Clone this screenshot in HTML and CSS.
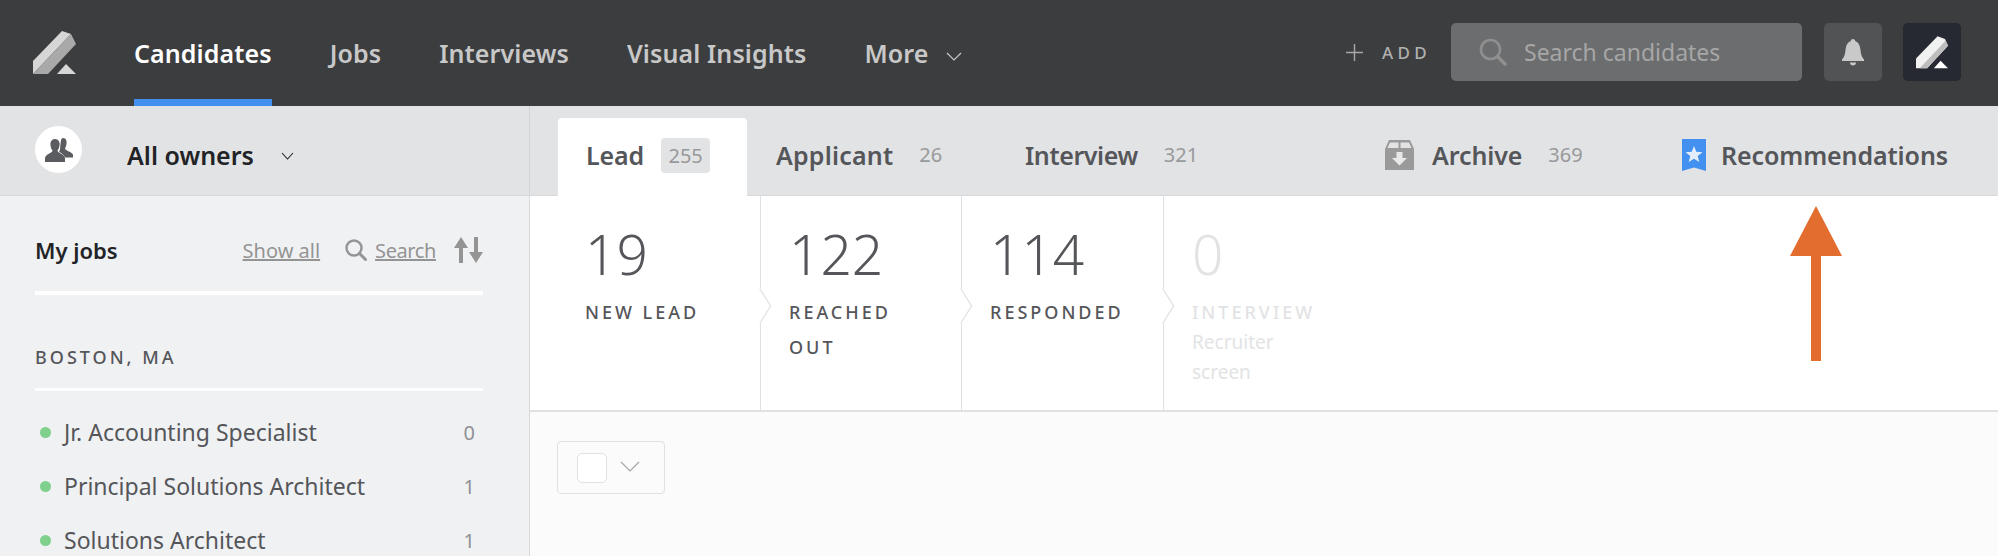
FILE: index.html
```html
<!DOCTYPE html>
<html lang="en">
<head>
    <title>Candidates</title>
    <meta charset="UTF-8" />
    <link rel="stylesheet" href="styles.css">
</head>
<body>
    <header class="topbar">
        <svg class="logo" viewBox="33 30 43 44">
            <path d="M33 60 62 30 71 33 33 73Z" fill="#d6d6d6"/>
            <path d="M33 73 71 33 76 43 48 73Z" fill="#a9a9a9"/>
            <path d="M57 73 66 63 76 73Z" fill="#d6d6d6"/>
        </svg>
        <nav class="mainnav">
            <a class="active">Candidates</a>
            <a>Jobs</a>
            <a>Interviews</a>
            <a>Visual Insights</a>
            <a>More<svg class="chev" viewBox="0 0 16 9"><path d="M1 1 8 8 15 1" fill="none" stroke="#c8c8c8" stroke-width="1.2"/></svg></a>
        </nav>
        <div class="topright">
            <svg class="plus" viewBox="0 0 17 17"><path d="M8.5 0V17M0 8.500H17" stroke="#a8a8a8" stroke-width="1.4"/></svg>
            <span class="add">ADD</span>
            <div class="search">
                <svg class="search-icon" viewBox="0 0 28 28"><circle cx="11.500" cy="11.500" r="9.500" fill="none" stroke="#8f8f8f" stroke-width="2.600"/><path d="M18.500 18.500 26 26" stroke="#8f8f8f" stroke-width="3.600" stroke-linecap="round"/></svg>
                <span>Search candidates</span>
            </div>
            <div class="iconbtn bell">
                <svg viewBox="0 0 24 28" width="24" height="28"><path d="M12 1c1.500 0 2.200 1 2.300 2.200C18 4.500 19 8 19.500 12c.4 4 1 7 3.500 9.500V23H1v-1.500C3.500 19 4.100 16 4.500 12 5 8 6 4.500 9.700 3.200 9.800 2 10.500 1 12 1Z" fill="#c9c9c9"/><path d="M9 24.500h6c0 2-1.300 3-3 3s-3-1-3-3Z" fill="#c9c9c9"/></svg>
            </div>
            <div class="iconbtn avatar">
                <svg viewBox="33 30 43 44" width="32" height="33">
                    <path d="M33 60 62 30 72 34 76 43 48 73H33Z" fill="#f1f1f1"/>
                    <path d="M38 73 73 36 76 43 48 73Z" fill="#bdbdbd"/>
                    <path d="M57 73 66 63 76 73Z" fill="#fff"/>
                </svg>
            </div>
        </div>
    </header>

    <div class="subbar">
        <div class="owners">
            <div class="owner-pic">
                <svg viewBox="0 0 30 26" width="30" height="26">
                    <path d="M19 1c3 0 4 3 3.500 6-.3 2-1 3.500-1.500 4.500 0 2 6 3 8 6v3H21c-1-3-4-4.500-6-5.500 1.500-2 1-5 1.500-8C17 4 17 1 19 1Z" fill="#5b5c5f"/>
                    <path d="M11 2c3.500 0 5 3 4.500 6.500-.3 2-1 4-2 5 0 2.500 7 3.500 7.500 7.500v4H1v-4c.5-4 7.500-5 7.500-7.500-1-1-1.700-3-2-5C6 5 7.500 2 11 2Z" fill="#5b5c5f"/>
                </svg>
            </div>
            <span class="owner-name">All owners</span>
            <svg class="chev-small" viewBox="0 0 13 8"><path d="M1 1 6.500 7 12 1" fill="none" stroke="#222" stroke-width="1.100"/></svg>
        </div>
        <div class="tabs">
            <div class="tab active">Lead <span class="badge">255</span></div>
            <div class="tab applicant">Applicant <span class="count">26</span></div>
            <div class="tab interview">Interview <span class="count">321</span></div>
            <div class="tab archive">
                <svg viewBox="0 0 29 30" width="29" height="30">
                    <path d="M4 0H25L29 9V30H0V9Z" fill="#9a9a9b"/>
                    <path d="M5 2.500H13.500V8H2.500ZM15.500 2.500H24L26.500 8H15.500Z" fill="#e2e3e5"/>
                    <path d="M11.500 12H17.500V18H22L14.500 25.500 7 18H11.500Z" fill="#e8e8e8"/>
                </svg>
                Archive <span class="count">369</span>
            </div>
            <div class="tab recs">
                <svg viewBox="0 0 24 32" width="24" height="32">
                    <path d="M0 0H24V32L12 28.500 0 32Z" fill="#4290ef"/>
                    <path d="M12 7 14.300 12.800 20.500 13.200 15.700 17.100 17.300 23.100 12 19.800 6.700 23.100 8.300 17.100 3.500 13.200 9.700 12.800Z" fill="#e4eefb"/>
                </svg>
                Recommendations
            </div>
        </div>
    </div>

    <div class="content">
        <aside class="sidebar">
            <div class="side-head">
                <strong>My jobs</strong>
                <a class="show-all">Show all</a>
                <svg class="side-search" viewBox="0 0 22 22"><circle cx="9" cy="9" r="7.500" fill="none" stroke="#949494" stroke-width="2.400"/><path d="M14.500 14.500 20.500 20.500" stroke="#949494" stroke-width="3" stroke-linecap="round"/></svg>
                <a class="search-link">Search</a>
                <svg class="sort" viewBox="0 0 29 26">
                    <path d="M7 0 14 11H9V26H5V11H0Z" fill="#949494"/>
                    <path d="M22 26 15 15H20V0H24V15H29Z" fill="#949494"/>
                </svg>
            </div>
            <div class="location">BOSTON, MA</div>
            <ul class="joblist">
                <li><i class="dot"></i>Jr. Accounting Specialist<span class="num">0</span></li>
                <li><i class="dot"></i>Principal Solutions Architect<span class="num">1</span></li>
                <li><i class="dot"></i>Solutions Architect<span class="num">1</span></li>
            </ul>
        </aside>
        <main class="main">
            <div class="stages">
                <div class="stage first">
                    <div class="big">19</div>
                    <div class="label">NEW LEAD</div>
                </div>
                <div class="stage second">
                    <div class="big">122</div>
                    <div class="label">REACHED OUT</div>
                </div>
                <div class="stage third">
                    <div class="big">114</div>
                    <div class="label">RESPONDED</div>
                </div>
                <div class="stage off">
                    <div class="big">0</div>
                    <div class="label">INTERVIEW</div>
                    <div class="sub">Recruiter screen</div>
                </div>
            </div>
            <div class="listarea">
                <div class="selectbox">
                    <span class="check"></span>
                    <svg class="chev-box" viewBox="0 0 20 11"><path d="M1 1 10 10 19 1" fill="none" stroke="#a5a5a5" stroke-width="1.200"/></svg>
                </div>
            </div>
        </main>
    </div>

    <svg class="callout" viewBox="0 0 52 155" width="52" height="155">
        <path d="M26 0 52 50H31V155H21V50H0Z" fill="#e36c2f"/>
    </svg>
</body>
</html>
```
FILE: styles.css
```css
* {
    box-sizing: border-box;
}
html, body {
    height: 100%;
}
body {
    margin: 0;
    overflow: hidden;
    font-family: "Noto Sans", Arial, sans-serif;
    background-color: #fbfbfb;
    color: #55565a;
    position: relative;
}

/* top bar */
.topbar {
    height: 106px;
    background-color: #3c3d3f;
    display: flex;
    align-items: center;
    padding: 0 37px 0 33px;
}
.logo {
    width: 43px;
    height: 44px;
    margin-right: 58px;
}
.mainnav {
    display: flex;
    gap: 58px;
    height: 106px;
    align-items: center;
    font-size: 25px;
    font-weight: 600;
    letter-spacing: 0.1px;
    color: #c8c8c8;
}
.mainnav a {
    display: flex;
    align-items: center;
    height: 106px;
}
.mainnav a.active {
    color: #fff;
    border-bottom: 7px solid #4390ee;
    padding-top: 7px;
}
.chev {
    width: 16px;
    height: 9px;
    margin-left: 17px;
    margin-top: 6px;
}
.topright {
    margin-left: auto;
    display: flex;
    align-items: center;
    padding-bottom: 2px;
}
.plus {
    width: 17px;
    height: 17px;
    margin-right: 19px;
}
.add {
    font-size: 17px;
    font-weight: 500;
    letter-spacing: 4.3px;
    color: #b0b0b0;
    margin-right: 20px;
}
.search {
    width: 351px;
    height: 58px;
    background-color: #6c6d6f;
    border-radius: 5px;
    display: flex;
    align-items: center;
    padding-left: 28px;
    font-size: 23px;
    color: #a6a6a6;
}
.search-icon {
    width: 28px;
    height: 28px;
    margin-right: 17px;
}
.iconbtn {
    width: 58px;
    height: 58px;
    border-radius: 5px;
    display: flex;
    align-items: center;
    justify-content: center;
}
.bell {
    background-color: #525355;
    margin-left: 22px;
}
.avatar {
    background-color: #262832;
    margin-left: 21px;
}

/* owner row and tabs */
.subbar {
    height: 90px;
    background-color: #e2e3e5;
    border-bottom: 1px solid #d8d9db;
    display: flex;
}
.owners {
    width: 530px;
    flex-shrink: 0;
    border-right: 1px solid #d3d4d6;
    display: flex;
    align-items: center;
    padding: 0 0 2px 35px;
}
.owner-pic {
    width: 47px;
    height: 47px;
    border-radius: 50%;
    background-color: #fff;
    display: flex;
    align-items: center;
    justify-content: center;
}
.owner-name {
    font-size: 25px;
    font-weight: 600;
    color: #222326;
    margin: 11px 0 0 45px;
}
.chev-small {
    width: 13px;
    height: 8px;
    margin: 13px 0 0 27px;
}
.tabs {
    flex: 1;
    display: flex;
    align-items: flex-end;
    padding-left: 28px;
    padding-right: 50px;
}
.tab {
    height: 77px;
    display: flex;
    align-items: center;
    font-size: 25px;
    font-weight: 600;
    color: #55565a;
    letter-spacing: -0.1px;
    padding-bottom: 4px;
}
.tab.active {
    width: 189px;
    background-color: #fff;
    border-radius: 4px 4px 0 0;
    padding-left: 28px;
    margin-bottom: -1px;
    height: 78px;
}
.badge, .count {
    font-size: 20px;
    font-weight: 400;
    color: #98999b;
    letter-spacing: 0;
}
.badge {
    width: 49px;
    height: 35px;
    margin-left: 17px;
    background-color: #e2e3e5;
    border-radius: 4px;
    display: flex;
    align-items: center;
    justify-content: center;
}
.count {
    margin-left: 26px;
}
.applicant {
    margin-left: 29px;
    width: 249px;
    letter-spacing: 0.2px;
}
.interview {
    width: 360px;
    letter-spacing: -0.4px;
}
.archive {
    width: 297px;
}
.archive svg {
    margin-right: 18px;
}
.recs svg {
    margin-right: 15px;
}

/* left column */
.content {
    display: flex;
    height: 360px;
}
.sidebar {
    width: 530px;
    flex-shrink: 0;
    background-color: #f0f1f3;
    border-right: 1px solid #d8d9db;
    padding: 0 46px 0 35px;
    overflow: hidden;
}
.side-head {
    height: 99px;
    padding-top: 13px;
    border-bottom: 4px solid #fff;
    display: flex;
    align-items: center;
    color: #949494;
    font-size: 20px;
}
.side-head strong {
    color: #222326;
    font-size: 22px;
    font-weight: 600;
    margin-right: auto;
}
.show-all, .search-link {
    text-decoration: underline;
}
.search-link {
    letter-spacing: -0.4px;
}
.side-search {
    width: 22px;
    height: 22px;
    margin: 0 8px 0 25px;
}
.sort {
    width: 29px;
    height: 26px;
    margin-left: 18px;
}
.location {
    height: 96px;
    padding-top: 50px;
    border-bottom: 3px solid #fff;
    font-size: 18px;
    font-weight: 500;
    letter-spacing: 3px;
    line-height: 24px;
}
.joblist {
    list-style: none;
    margin: 14px 0 0;
    padding: 0;
}
.joblist li {
    height: 54px;
    display: flex;
    align-items: center;
    font-size: 23px;
}
.dot {
    width: 11px;
    height: 11px;
    border-radius: 50%;
    background-color: #7fd08c;
    margin: 0 13px 0 5px;
}
.num {
    margin-left: auto;
    margin-right: 8px;
    font-size: 20px;
    color: #8f9093;
}

/* stages */
.main {
    flex: 1;
}
.stages {
    height: 216px;
    background-color: #fff;
    border-bottom: 2px solid #e0e1e3;
    display: flex;
}
.stage {
    position: relative;
    padding: 23px 0 0 28px;
    border-right: 1px solid #e0e1e3;
}
.stage.first {
    width: 231px;
    padding-left: 55px;
}
.stage.second {
    width: 201px;
}
.stage.third {
    width: 202px;
}
.stage.off {
    border-right: none;
    color: #e2e3e5;
    width: 200px;
}
.stage:not(.off)::after {
    content: "";
    position: absolute;
    right: -8px;
    top: 102px;
    width: 15px;
    height: 15px;
    background-color: #fff;
    border-top: 1px solid #e0e1e3;
    border-right: 1px solid #e0e1e3;
    transform: scaleY(1.6) rotate(45deg);
}
.big {
    font-size: 55px;
    font-weight: 300;
    line-height: 70px;
}
.label {
    font-size: 18px;
    font-weight: 500;
    letter-spacing: 3px;
    line-height: 35px;
    margin-top: 6px;
    width: 145px;
}
.sub {
    font-size: 19px;
    line-height: 30px;
    width: 110px;
    margin-top: -3px;
}
.listarea {
    padding: 29px 0 0 27px;
}
.selectbox {
    width: 108px;
    height: 53px;
    border: 1px solid #e0e1e3;
    border-radius: 4px;
    display: flex;
    align-items: center;
    padding-left: 19px;
}
.check {
    width: 30px;
    height: 30px;
    background-color: #fff;
    border: 1px solid #e0e1e3;
    border-radius: 5px;
}
.chev-box {
    width: 20px;
    height: 11px;
    margin: -2px 0 0 13px;
}

/* orange arrow laid over the screenshot */
.callout {
    position: absolute;
    left: 1790px;
    top: 206px;
}
```
